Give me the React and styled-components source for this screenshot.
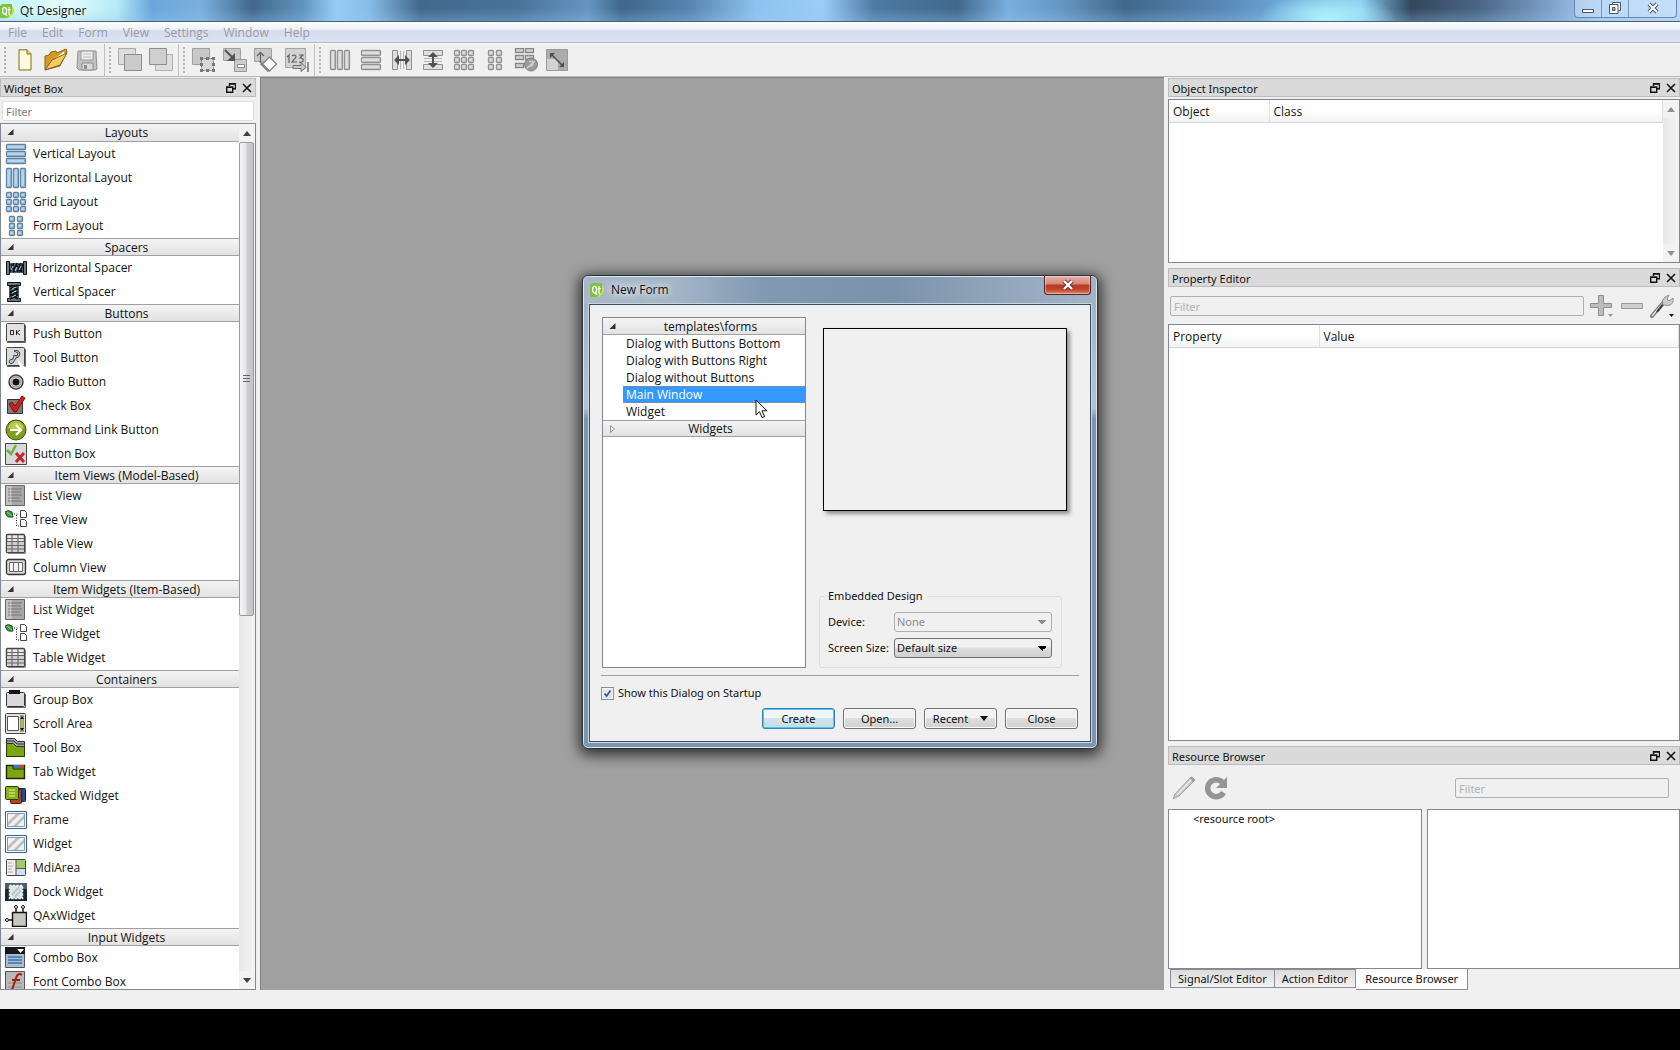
import React, { useState } from 'react';
import styled, { createGlobalStyle, css } from 'styled-components';

const GlobalStyle = createGlobalStyle`
  * {
    box-sizing: border-box;
  }

  body {
    margin: 0;
    background: #000;
    color: #111;
    font-family: "Open Sans", "Noto Sans", sans-serif;
    font-size: 12px;
    line-height: 16px;
  }

  button, input, select {
    margin: 0;
    color: inherit;
    font: inherit;
  }

  ul {
    margin: 0;
    padding: 0;
    list-style: none;
  }

  svg {
    display: block;
    flex: none;
  }
`;

const smallText = css`
  font-family: "Noto Sans", sans-serif;
  font-size: 11px;
  line-height: 16px;
`;

const Screen = styled.div`
  position: relative;
  display: flex;
  flex-direction: column;
  height: 100vh;
  padding-bottom: 41px;
  overflow: hidden;
  background: #000;
`;

const AppWindow = styled.div`
  display: flex;
  flex-direction: column;
  flex: 1;
  min-height: 0;
  background: #f0f0f0;
`;

const TitleBar = styled.header`
  display: flex;
  align-items: center;
  flex: none;
  height: 22px;
  border-bottom: 1px solid #45607c;
  background:
    linear-gradient(180deg, transparent 40%, rgba(150, 200, 240, 0.3) 100%),
    radial-gradient(ellipse 70px 30px at 79% 100%, #b4fbff 10%, transparent 100%),
    linear-gradient(90deg, #c2f4f4 0, #e4fcfa 4%, #b4eaf6 7%, #6aa6dc 9%, #7ab0de 12%, #41688c 15%,
      #5f93bd 18%, #97ccf4 20%, #87bce6 22%, #41688c 25%, #4a749c 31%, #6596c0 35%, #3f668c 37%,
      #5585b0 41%, #8fc2ee 45%, #9accf6 49%, #4d7ba4 52%, #41688c 57%, #7aaede 60%, #6798c4 63%,
      #41688c 67%, #5a8ab8 73%, #6aa4d6 76%, #84c8ec 81%, #33475e 84%, #4a6684 88%, #7a9cc4 92%,
      #a8cdf2 95%, #bcdcfa 100%);
`;

const TitleText = styled.h1`
  flex: 1;
  margin: 0 0 0 6px;
  font-size: 12px;
  font-weight: 400;
`;

const WindowButtons = styled.div`
  display: flex;
  align-self: flex-start;
  height: 18px;
  margin-right: 3px;
  border: 1px solid #6c87a6;
  border-top: 0;
  border-radius: 0 0 4px 4px;
  background: rgba(205, 228, 250, 0.5);
`;

const WindowButton = styled.button`
  display: flex;
  align-items: center;
  justify-content: center;
  width: ${({ $wide }) => ($wide ? 47 : 27)}px;
  padding: 0 0 2px;
  border: 0;
  border-right: ${({ $wide }) => ($wide ? '0' : '1px solid #7d98b6')};
  background: none;
`;

const MenuBar = styled.nav`
  display: flex;
  align-items: center;
  flex: none;
  height: 21px;
  padding: 2px 2px 0;
  border-bottom: 1px solid #b4b8c4;
  background: linear-gradient(#fdfdfe 0, #f0f2f9 35%, #d6dcee 45%, #dde4f4 100%);
`;

const MenuItem = styled.button`
  padding: 0 6px;
  margin-right: 3px;
  border: 0;
  background: none;
  color: #9b9ca3;
`;

const ToolBars = styled.div`
  display: flex;
  flex: none;
  height: 34px;
  border-top: 1px solid #fafafa;
  border-bottom: 1px solid #b8b8b8;
`;

const ToolBar = styled.div`
  display: flex;
  align-items: center;
  gap: 7px;
  padding: 0 5px 0 4px;
  border-right: ${({ $last }) => ($last ? '0' : '1px solid #c0c0c0')};
`;

const Grip = styled.span`
  width: 2px;
  height: 26px;
  background: repeating-linear-gradient(#b2b2b2 0 2px, transparent 2px 4px);
`;

const IconButton = styled.button`
  display: flex;
  align-items: center;
  justify-content: center;
  min-width: ${({ $tool }) => ($tool ? 24 : 0)}px;
  padding: 0;
  border: 0;
  background: none;
`;

const Workspace = styled.div`
  display: flex;
  flex: 1;
  gap: 4px;
  min-height: 0;
`;

const LeftColumn = styled.aside`
  display: flex;
  flex-direction: column;
  flex: none;
  width: 256px;
  padding-top: 1px;
`;

const MdiSpace = styled.main`
  flex: 1;
  border-top: 1px solid #828282;
  border-left: 1px solid #828282;
  background: #a0a0a0;
`;

const RightColumn = styled.aside`
  display: flex;
  flex-direction: column;
  flex: none;
  width: 512px;
  padding-top: 1px;
`;

const Dock = styled.section`
  display: flex;
  flex-direction: column;
  flex: ${({ $grow }) => ($grow ? '1' : 'none')};
  height: ${({ $height }) => ($height ? `${$height}px` : 'auto')};
  min-height: 0;
  margin-bottom: ${({ $gap }) => $gap || 0}px;
`;

const DockTitle = styled.div`
  display: flex;
  align-items: center;
  flex: none;
  gap: 6px;
  height: 19px;
  padding: 0 3px;
  border: 1px solid #bcbcbc;
  background: #dadada;
`;

const DockName = styled.h2`
  ${smallText}
  flex: 1;
  margin: 0;
  padding-top: 2px;
  font-weight: 400;
`;

const FilterInput = styled.input`
  ${smallText}
  width: 100%;
  height: 20px;
  padding: 1px 3px 0;
  border: 1px solid ${({ disabled }) => (disabled ? '#b0b0b0' : '#dcdfe4')};
  border-radius: 2px;
  background: ${({ disabled }) => (disabled ? '#f0f0f0' : '#fff')};

  &::placeholder {
    color: ${({ disabled }) => (disabled ? '#b2b2b2' : '#7c7c7c')};
    opacity: 1;
  }
`;

const WidgetFilter = styled.div`
  display: flex;
  flex: none;
  padding: 4px 2px 2px;
`;

const ListFrame = styled.div`
  display: flex;
  flex: 1;
  min-height: 0;
  margin-top: ${({ $spaced }) => ($spaced ? 2 : 0)}px;
  border: 1px solid #828790;
  background: #fff;
`;

const ListBody = styled.div`
  flex: 1;
  min-width: 0;
  overflow: hidden;
`;

const CategoryButton = styled.button`
  position: relative;
  display: block;
  width: 100%;
  height: ${({ $compact }) => ($compact ? 17 : 18)}px;
  padding: 0 0 0 13px;
  border: solid #a0a0a0;
  border-width: ${({ $first }) => ($first ? '0 0 1px' : '1px 0')};
  background: linear-gradient(#f4f4f4, #e2e2e2);
  line-height: 15px;
  text-align: center;
`;

const CategoryArrow = styled.svg`
  position: absolute;
  top: 4px;
  left: 6px;
`;

const WidgetRow = styled.li`
  display: flex;
  align-items: center;
  gap: 6px;
  height: 24px;
  padding-left: 4px;
  white-space: nowrap;
`;

const ScrollTrack = styled.div`
  display: flex;
  flex-direction: column;
  flex: none;
  width: 16px;
  background: linear-gradient(90deg, #e8e8e8, #f4f4f4);
`;

const ScrollArrow = styled.button`
  display: flex;
  align-items: center;
  justify-content: center;
  flex: none;
  height: 18px;
  padding: 0;
  border: 0;
  background: #f2f2f2;
`;

const ScrollThumb = styled.div`
  display: flex;
  align-items: center;
  justify-content: center;
  flex: ${({ $share }) => $share};
  margin-right: 1px;
  border: 1px solid #9a9a9a;
  border-radius: 2px;
  background: linear-gradient(90deg, #f6f6f6, #e6e6e8 45%, #cfcfd2 55%, #c4c4c8);
`;

const ScrollRest = styled.div`
  flex: ${({ $share }) => $share};
`;

const HeaderTable = styled.table`
  flex: 1;
  align-self: flex-start;
  border-collapse: collapse;
  table-layout: fixed;
  width: 100%;
`;

const HeaderCell = styled.th`
  width: ${({ $width }) => ($width ? `${$width}px` : 'auto')};
  height: 22px;
  padding: 2px 4px 0;
  border-right: 1px solid #dfe2e5;
  border-bottom: 1px solid #d5d5d5;
  background: linear-gradient(#fff 45%, #f1f3f5);
  font-weight: 400;
  text-align: left;
`;

const PropertyTools = styled.div`
  display: flex;
  align-items: center;
  flex: none;
  gap: 6px;
  height: 37px;
  padding: 0 6px 0 2px;
`;

const ResourceTools = styled.div`
  display: flex;
  align-items: center;
  flex: none;
  gap: 8px;
  height: 44px;
  padding: 2px 11px 0 4px;
`;

const ResourceFilter = styled.div`
  display: flex;
  width: 214px;
  margin-left: auto;
`;

const ResourceSplit = styled.div`
  display: grid;
  grid-template-columns: 254px 1fr;
  flex: 1;
  gap: 5px;
  min-height: 0;
`;

const ResourceList = styled.ul`
  ${smallText}
  padding: 1px 24px;
  border: 1px solid #828790;
  background: #fff;
`;

const DockTabs = styled.div`
  display: flex;
  align-items: flex-start;
  flex: none;
  height: 21px;
  padding-left: 2px;
`;

const DockTab = styled.button`
  ${smallText}
  height: ${({ $active }) => ($active ? 21 : 19)}px;
  padding: 0 ${({ $active }) => ($active ? 9 : 7)}px;
  border: 1px solid #898c95;
  border-top-width: ${({ $active }) => ($active ? 0 : 1)}px;
  background: ${({ $active }) => ($active ? '#fff' : 'linear-gradient(#dcdcdc, #f2f2f2)')};
  white-space: nowrap;

  & + & {
    border-left: 0;
  }
`;

const StatusBar = styled.footer`
  flex: none;
  height: 19px;
`;

const DialogLayer = styled.div`
  position: absolute;
  inset: 0;
  display: flex;
  align-items: flex-start;
  justify-content: center;
  padding-top: 275px;
  pointer-events: none;
`;

const Dialog = styled.div`
  position: relative;
  display: flex;
  flex-direction: column;
  width: 516px;
  padding: 0 6px 6px;
  border: 1px solid #27333f;
  border-radius: 6px;
  background:
    linear-gradient(90deg, #a9b9ca 0, #a4b5c6 18%, #8199b3 35%, #7b92ac 60%, #91a5ba 80%, #a3b4c4 100%) top / 100% 28px no-repeat,
    linear-gradient(#9fb0c2 0, #b4c3d2 28%, #7f96b0 30%, #7f96b0 100%);
  box-shadow: inset 0 0 0 1px #d8e4ee, 0 3px 14px 3px rgba(0, 0, 0, 0.7);
  pointer-events: auto;
`;

const DialogTitle = styled.div`
  display: flex;
  align-items: center;
  height: 28px;
  padding-left: 1px;
`;

const DialogName = styled.h2`
  flex: 1;
  margin: 0 0 0 7px;
  font-size: 12px;
  font-weight: 400;
  text-shadow: 0 0 8px #fff, 0 0 8px #fff;
`;

const DialogClose = styled.button`
  display: flex;
  align-items: center;
  justify-content: center;
  align-self: flex-start;
  width: 47px;
  height: 19px;
  padding: 0 0 1px;
  border: 1px solid #4c2727;
  border-top: 0;
  border-radius: 0 0 4px 4px;
  background: linear-gradient(#e6b3a8 0, #d58574 45%, #b93a24 50%, #c4452b 75%, #dc8766 100%);
  box-shadow: inset 0 0 0 1px rgba(255, 255, 255, 0.4);
`;

const DialogBody = styled.div`
  padding: 12px 11px;
  border: 1px solid #3b4f63;
  background: #f0f0f0;
  box-shadow: 0 0 0 1px #c8d6e2;
`;

const DialogColumns = styled.div`
  display: grid;
  grid-template-columns: 204px 1fr;
  gap: 13px;
  height: 351px;
  padding-left: 1px;
`;

const TemplateTree = styled.div`
  border: 1px solid #828790;
  background: #fff;
`;

const TemplateItem = styled.button`
  display: block;
  width: calc(100% - 20px);
  height: 17px;
  margin-left: 20px;
  padding: 0 2px;
  border: 1px solid ${({ $selected }) => ($selected ? '#6f8fae' : 'transparent')};
  border-width: 1px 0 1px 1px;
  background: ${({ $selected }) => ($selected ? '#3399ff' : 'none')};
  color: ${({ $selected }) => ($selected ? '#fff' : 'inherit')};
  line-height: 15px;
  text-align: left;
`;

const PreviewColumn = styled.div`
  display: flex;
  flex-direction: column;
  justify-content: space-between;
  padding-top: 11px;
`;

const Preview = styled.div`
  width: 244px;
  height: 183px;
  margin-left: 4px;
  border: 1px solid #000;
  box-shadow: 3px 3px 4px rgba(0, 0, 0, 0.4);
`;

const EmbeddedGroup = styled.fieldset`
  ${smallText}
  display: grid;
  grid-template-columns: 66px 158px;
  align-content: start;
  row-gap: 6px;
  width: 243px;
  margin: 0;
  padding: 8px 8px 9px;
  border: 1px solid #d5dfe5;
  border-radius: 3px;
`;

const GroupLegend = styled.legend`
  padding: 0 4px 0 0;
`;

const FieldLabel = styled.label`
  line-height: 20px;
  white-space: nowrap;
`;

const Select = styled.select`
  height: 20px;
  padding: 0 16px 0 2px;
  border: 1px solid ${({ disabled }) => (disabled ? '#b0b0b0' : '#707070')};
  border-radius: 3px;
  appearance: none;
  background:
    ${({ disabled }) => css`
      linear-gradient(to bottom right, ${disabled ? '#8c8c8c' : '#000'} 50%, transparent 50%) right 4px top 7px / 5px 5px no-repeat,
      linear-gradient(to bottom left, ${disabled ? '#8c8c8c' : '#000'} 50%, transparent 50%) right 9px top 7px / 4px 5px no-repeat,
      ${disabled ? '#f0f0f0' : 'linear-gradient(#f2f2f2 45%, #dddddd 50%, #cfcfcf)'}
    `};
  color: ${({ disabled }) => (disabled ? '#8c8c8c' : '#111')};
  opacity: 1;
`;

const DialogFooter = styled.div`
  margin-top: 7px;
  padding-top: 9px;
  border-top: 1px solid #a0a0a0;
`;

const CheckLabel = styled.label`
  ${smallText}
  display: flex;
  align-items: center;
  gap: 4px;
`;

const CheckInput = styled.input`
  width: 13px;
  height: 13px;
  appearance: none;
  border: 1px solid #8e8f8f;
  background: #e4e9f0;
  box-shadow: inset 0 0 0 1px #f4f4f4;

  &:checked {
    background: url("data:image/svg+xml,%3Csvg xmlns='http://www.w3.org/2000/svg' viewBox='0 0 11 11'%3E%3Cpath d='M2.5 5.5 4.6 8 8.5 2.5' fill='none' stroke='%233d5a92' stroke-width='1.8'/%3E%3C/svg%3E") #e0e6ee;
  }
`;

const ButtonRow = styled.div`
  display: flex;
  justify-content: flex-end;
  gap: 8px;
  margin-top: 7px;
  padding-right: 1px;
`;

const PushButton = styled.button`
  ${smallText}
  display: flex;
  align-items: center;
  justify-content: center;
  gap: 12px;
  width: 73px;
  height: 21px;
  padding: 0;
  border: 1px solid ${({ $primary }) => ($primary ? '#3c7fb1' : '#707070')};
  border-radius: 3px;
  background: ${({ $primary }) =>
    $primary ? 'linear-gradient(#eef6f8 45%, #d2e4ea 50%, #c4dde4)' : 'linear-gradient(#f2f2f2 45%, #dedede 50%, #d0d0d0)'};
  box-shadow: inset 0 0 0 1px ${({ $primary }) => ($primary ? '#48c8ee' : '#fbfbfb')};
`;

const MousePointer = styled.svg`
  position: absolute;
  top: 123px;
  left: 172px;
`;

const Icon = ({ children, size = 22, box = 22 }) => (
  <svg width={size} height={size} viewBox={`0 0 ${box} ${box}`} aria-hidden="true">
    {children}
  </svg>
);

const QtLogo = ({ size = 14 }) => (
  <Icon size={size} box={14}>
    <path d="M2 0h10v10l-4 4H0V2z" fill="#80c342" />
    <path d="M12 2l2 3v4l-5 5H7l5-5z" fill="#cde03a" />
    <ellipse cx="4.6" cy="6.8" rx="2" ry="3.4" fill="none" stroke="#fff" strokeWidth="1.3" />
    <path d="M5 9l2 3M9 3v7q0 1 1.5 1M7.8 5.6h3" fill="none" stroke="#fff" strokeWidth="1.2" />
  </Icon>
);

const Bars = ({ rects, fill, stroke, shade }) => (
  <Icon>
    {rects.map(([x, y, w, h]) => (
      <g key={`${x}-${y}`}>
        <rect x={x + 0.5} y={y + 0.5} width={w - 1} height={h - 1} rx="1" fill={fill} stroke={stroke} strokeWidth="1.3" />
        <path d={`M${x + 1.5} ${y + h - 1.5}H${x + w - 1.5}V${y + 1.5}`} fill="none" stroke={shade} />
      </g>
    ))}
  </Icon>
);

const horizontalRects = [[1, 1, 6, 20], [8, 1, 6, 20], [15, 1, 6, 20]];
const verticalRects = [[1, 1, 20, 6], [1, 8, 20, 6], [1, 15, 20, 6]];
const gridRects = [1, 8, 15].flatMap((y) => [1, 8, 15].map((x) => [x, y, 6, 6]));
const formRects = [1, 8, 15].flatMap((y) => [[4, y, 6, 6], [12, y, 6, 6]]);
const blue = { fill: '#b3d6ee', stroke: '#63819d', shade: '#86b2d3' };
const grey = { fill: '#dedede', stroke: '#929292', shade: '#bcbcbc' };

const Arrow = ({ up, color = '#404040' }) => (
  <svg width="8" height="5" viewBox="0 0 8 5" aria-hidden="true">
    <path d={up ? 'M0 5L4 0l4 5z' : 'M0 0h8L4 5z'} fill={color} />
  </svg>
);

const toolIcons = {
  newForm: (
    <Icon>
      <path d="M5 .8h8l4 4V21H5z" fill="#fff6b8" stroke="#8a6a20" />
      <path d="M6 2h6v4h4v14H6z" fill="#fffbe0" />
      <path d="M13 .8V5h4" fill="#f0ce60" stroke="#8a6a20" />
    </Icon>
  ),
  open: (
    <Icon size={24} box={24}>
      <path d="M1 22V8l4-1 2-3 5-1 1 2 9-4 1 3-7 14z" fill="#d39a26" stroke="#8b6418" />
      <path d="M5 15L20 3l1 4L8 18z" fill="#fffbe6" stroke="#b79040" strokeWidth=".6" />
      <path d="M1 22l7-10 15-7-7 12z" fill="#f2ca62" stroke="#8b6418" />
    </Icon>
  ),
  save: (
    <Icon>
      <path d="M2 2h18l1 18-2 1H3l-2-2z" fill="#c2c2c2" stroke="#929292" />
      <path d="M5 2h12v9H5z" fill="#ededed" stroke="#999" />
      <path d="M7 5h8M7 8h8" stroke="#bbb" />
      <path d="M6 14h11v7H6z" fill="#dadada" stroke="#8a8a8a" />
      <path d="M8 16h3v4H8z" fill="#8d8d8d" />
    </Icon>
  ),
  back: (
    <Icon size={24} box={24}>
      <path d="M.5.500h17v16H.5z" fill="#dcdcdc" stroke="#aaa" />
      <path d="M6.500 6.500h17v16h-17z" fill="#cbcbcb" stroke="#8d8d8d" />
    </Icon>
  ),
  front: (
    <Icon size={24} box={24}>
      <path d="M6.500 6.500h17v16h-17z" fill="#dedede" stroke="#b0b0b0" />
      <path d="M.5.500h17v16H.5z" fill="#cfcfcf" stroke="#8d8d8d" />
    </Icon>
  ),
  widgets: (
    <Icon size={24} box={24}>
      <path d="M.5.500h17v16H.5z" fill="#c8c8c8" stroke="#a0a0a0" />
      <path d="M9.500 10.500h12v12h-12z" fill="#d8d8d8" stroke="#777" strokeDasharray="2 1" />
      <path d="M8 9h3v3H8zM14 9h3v3h-3zM20 9h3v3h-3zM8 15h3v3H8zM20 15h3v3h-3zM8 21h3v3H8zM14 21h3v3h-3zM20 21h3v3h-3z" fill="#777" />
    </Icon>
  ),
  signals: (
    <Icon size={24} box={24}>
      <path d="M.5.500h17v12H.5z" fill="#c8c8c8" stroke="#a0a0a0" />
      <path d="M11.500 11.500h12v12h-12z" fill="#ccc" stroke="#999" />
      <path d="M14.500 16.500h7v3h-7z" fill="#fff" stroke="#888" />
      <path d="M2 2l9 9" stroke="#555" strokeWidth="2" />
      <path d="M12 5v8H4z" fill="#555" />
    </Icon>
  ),
  buddies: (
    <Icon size={24} box={24}>
      <path d="M.5.500h17v13H.5z" fill="#c8c8c8" stroke="#a0a0a0" />
      <path d="M7 15l8 8" stroke="#777" strokeWidth="3" />
      <path d="M15.500 9l7 7-7 7-7-7z" fill="#fafafa" stroke="#888" strokeWidth="1.500" />
      <path d="M6.500 15V5M3 8l3.500-3.500L10 8" fill="none" stroke="#666" strokeWidth="1.300" />
    </Icon>
  ),
  order: (
    <Icon size={24} box={24}>
      <path d="M.5.500h20v19H.5z" fill="#d2d2d2" stroke="#a6a6a6" />
      <path d="M2 9l2-2v8M7 8q4-2 4 1l-4 5h5M14 7h4l-3 3q4 0 3 3-1 2-4 1" fill="none" stroke="#606060" strokeWidth="1.200" />
      <path d="M8 17.500h8v-3l5 5-5 4v-3H8z" fill="#c9c9c9" stroke="#707070" />
      <path d="M23 14v10" stroke="#707070" strokeWidth="1.500" />
    </Icon>
  ),
  horizontal: <Bars rects={horizontalRects} {...grey} />,
  vertical: <Bars rects={verticalRects} {...grey} />,
  splitH: (
    <Icon>
      <path d="M1.500 1.500h5v19h-5zM15.500 1.500h5v19h-5z" fill="#dedede" stroke="#929292" />
      <path d="M9.500 2v18M12.500 2v18" stroke="#b4b4b4" />
      <path d="M3 11l5-5v4h6V6l5 5-5 5v-4H8v4z" fill="#505050" />
    </Icon>
  ),
  splitV: (
    <Icon>
      <path d="M1.500 1.500h19v5h-19zM1.500 15.500h19v5h-19z" fill="#dedede" stroke="#929292" />
      <path d="M2 9.500h18M2 12.500h18" stroke="#b4b4b4" />
      <path d="M11 3l5 5h-4v6h4l-5 5-5-5h4V8H6z" fill="#505050" />
    </Icon>
  ),
  grid: <Bars rects={gridRects} {...grey} />,
  form: <Bars rects={formRects} {...grey} />,
  breakLayout: (
    <Icon size={24} box={24}>
      <path d="M1.500.500h8v4h-8zM11.500.500h8v4h-8zM1.500 7.500h8v4h-8zM11.500 7.500h8v4h-8zM1.500 15.500h8v4h-8z" fill="#d2d2d2" stroke="#888" strokeWidth="1.300" />
      <circle cx="17" cy="16.500" r="6.500" fill="#9a9a9a" stroke="#7c7c7c" />
      <path d="M13 20l8-7M15 14q5-2 4 2l-2 3" fill="none" stroke="#d4d4d4" strokeWidth="1.300" />
    </Icon>
  ),
  adjust: (
    <Icon>
      <path d="M.5.500h21v21H.5z" fill="#ababab" stroke="#9a9a9a" />
      <path d="M1 10h11v11H1z" fill="#d2d2d2" />
      <path d="M6 6l11 11" stroke="#4e4e4e" strokeWidth="1.600" />
      <path d="M4 4h5L4 9zM18 18h-5l5-5z" fill="#4e4e4e" />
    </Icon>
  ),
};

const listIcon = (
  <Icon>
    <path d="M.5.500h19v20H.5z" fill="#a8a8a8" stroke="#666" />
    <path d="M1 1h6v19H1z" fill="#d4d4d4" opacity=".6" />
    <path d="M3 4h2M3 7h2M3 10h2M3 13h2M3 16h2M6 4h11M6 7h10M6 10h11M6 13h9M6 16h11" stroke="#747474" />
  </Icon>
);

const treeIcon = (
  <Icon>
    <path d="M0 3q3-3 7 0l1 5q-6 1-7-3z" fill="#3c9a3c" stroke="#184f18" />
    <path d="M2 3l5 4" stroke="#9ad29a" />
    <path d="M9 5h5M11.500 6v11h4" fill="none" stroke="#222" strokeDasharray="1 1.500" />
    <path d="M15.500 1.500h4l2 2v5h-6zM15.500 10.500h4l2 2v5h-6z" fill="#fff" stroke="#444" />
  </Icon>
);

const tableIcon = (
  <Icon>
    <path d="M3 20.500h17.500V3" fill="none" stroke="#999" />
    <rect x="1.500" y="1.500" width="18" height="18" rx="1" fill="#e9e9e9" stroke="#444" strokeWidth="1.400" />
    <path d="M2 8h17v11H2z" fill="#cfcfcf" />
    <path d="M2 5.500h17M2 8.500h17M2 12.500h17M2 16h17M7 2v17M13 2v17" stroke="#666" strokeWidth="1.100" />
  </Icon>
);

const stripes = (
  <Icon>
    <path d="M.5 2.500h21v17H.5z" fill="#fff" stroke="#35648f" />
    <path d="M2.500 4.500h17v13h-17z" fill="#f1f1f1" stroke="#7b9cba" />
    <path d="M3 13l8-8h4L3 17zM8 17L19 6v4l-7 7z" fill="#c0c0c0" />
  </Icon>
);

const widgetIcons = {
  vertical: <Bars rects={verticalRects} {...blue} />,
  horizontal: <Bars rects={horizontalRects} {...blue} />,
  grid: <Bars rects={gridRects} {...blue} />,
  form: <Bars rects={formRects} {...blue} />,
  hSpacer: (
    <Icon>
      <path d="M1.500 4.500h3v13h-3zM18.500 4.500h3v13h-3z" fill="#777" stroke="#111" />
      <path d="M5 6h13v10H5z" fill="#536270" />
      <path d="M5 15l4-9M8 15l4-9M12 15l4-9M15 15l3-8M6 7l4 8M11 7l4 8M14 7l3 8" stroke="#0d1217" strokeWidth="1.500" />
      <path d="M6 13l2-4M10 14l2-4M14 13l2-4" stroke="#c3d5e4" />
    </Icon>
  ),
  vSpacer: (
    <Icon>
      <path d="M2.500 1.500h13v3h-13zM2.500 17.500h13v3h-13z" fill="#777" stroke="#111" />
      <path d="M4 5h10v13H4z" fill="#536270" />
      <path d="M5 8l8-4M5 12l8-5M5 15l8-4M5 18l8-4M5 5l8 4M5 10l8 4M5 13l8 5" stroke="#0d1217" strokeWidth="1.500" />
      <path d="M7 8l4-2M7 12l4-2M7 16l4-2" stroke="#c3d5e4" />
    </Icon>
  ),
  push: (
    <Icon>
      <rect x="2" y="2" width="19" height="18" rx="1" fill="#666" />
      <rect x="1.500" y=".5" width="18" height="18" rx="1" fill="#e2e2e2" stroke="#444" />
      <path d="M5.500 7.500h3v4h-3zM11.500 7v5M15 7l-3 2.500 3 2.500" fill="none" stroke="#222" />
    </Icon>
  ),
  tool: (
    <Icon>
      <rect x="2" y="2" width="19" height="18" rx="1" fill="#666" />
      <rect x="1.500" y=".5" width="18" height="18" rx="1" fill="#d8dade" stroke="#444" />
      <path d="M9 4q5-2 6 3-1 4-4 4l-3 5q-3 2-4-1 0-3 4-3l1-4 3 1 1-3z" fill="#bcc3c9" stroke="#444" />
      <path d="M12 12l8 8h-5z" fill="#fff" />
    </Icon>
  ),
  radio: (
    <Icon>
      <circle cx="11" cy="11" r="7" fill="#c8c8c8" stroke="#444" strokeWidth="1.500" />
      <circle cx="11" cy="11" r="5" fill="#dcdcdc" stroke="#999" />
      <circle cx="11" cy="11" r="3.500" fill="#111" />
    </Icon>
  ),
  check: (
    <Icon>
      <path d="M2.500 4.500h15v14h-15z" fill="#7c7c7c" stroke="#333" />
      <path d="M4 9l3-2 3 4 7-10 3 2-9 14H9z" fill="#c62222" stroke="#7a0e0e" />
    </Icon>
  ),
  command: (
    <Icon>
      <circle cx="11" cy="11" r="10" fill="#7f9f1e" stroke="#3f5208" />
      <path d="M3 9q2-6 8-7 6 1 8 7-8 3-16 0z" fill="#b4ce4c" />
      <path d="M5 11h10M11 6l5 5-5 5" fill="none" stroke="#fff" strokeWidth="2.200" />
    </Icon>
  ),
  buttonBox: (
    <Icon>
      <path d="M.5.500h21v21H.5z" fill="#d8d8d8" stroke="#444" />
      <path d="M2 7l4 4 5-9" fill="none" stroke="#6cb33e" strokeWidth="2.500" />
      <path d="M11 10l8 9M19 10l-8 9" stroke="#c3272b" strokeWidth="3" />
    </Icon>
  ),
  list: listIcon,
  tree: treeIcon,
  table: tableIcon,
  column: (
    <Icon>
      <rect x="1.500" y="2.500" width="19" height="15" rx="2" fill="#d8d8d8" stroke="#333" strokeWidth="1.300" />
      <path d="M4.500 5.500h4v9h-4zM8.500 5.500h5v9h-5zM13.500 5.500h4v9h-4z" fill="#f4f4f4" stroke="#666" />
    </Icon>
  ),
  group: (
    <Icon>
      <rect x="1.500" y="3.500" width="18" height="14" rx="1" fill="#d9d9d9" stroke="#333" />
      <path d="M4 1h11v4H4z" fill="#111" />
      <path d="M2 18.500h18.500V5" fill="none" stroke="#666" />
    </Icon>
  ),
  scroll: (
    <Icon>
      <rect x=".5" y=".5" width="20" height="20" rx="1" fill="#e2e2e2" stroke="#444" />
      <path d="M2.500 3.500h11v14h-11z" fill="#fff" stroke="#555" />
      <path d="M15.500 2.500h3v16h-3z" fill="#a8c34a" stroke="#666" strokeWidth=".5" />
      <path d="M15 6l2-3 2 3zM15 15h4l-2 3z" fill="#111" />
    </Icon>
  ),
  toolBox: (
    <Icon>
      <path d="M1.500 1.500h8l3 3h7v15h-18z" fill="#a5a8b5" stroke="#333" />
      <path d="M1.500 6.500h7l3 3h8v10h-18z" fill="#7da512" stroke="#2a3c04" />
      <path d="M2 4h7l3 3h7" fill="none" stroke="#333" />
    </Icon>
  ),
  tab: (
    <Icon>
      <path d="M1.500 4.500h18v13h-18z" fill="#7da512" stroke="#1c2a02" strokeWidth="1.400" />
      <path d="M8 4h6v3H8z" fill="#3a78b8" />
      <path d="M14 4h5v3h-5z" fill="#c24a22" />
      <path d="M2 4.500h6V8h11" fill="none" stroke="#1c2a02" />
    </Icon>
  ),
  stacked: (
    <Icon>
      <rect x="9.500" y="3.500" width="11" height="13" rx="1" fill="#26489c" stroke="#101c44" />
      <rect x="5.500" y="4.500" width="11" height="14" rx="1" fill="#b2441c" stroke="#4c1a08" />
      <rect x=".5" y="1.500" width="13" height="13" rx="1" fill="#86b01a" stroke="#2a3c04" />
      <path d="M4 5h6M4 8h6M4 11h6" stroke="#e4f2a4" />
    </Icon>
  ),
  stripes,
  mdi: (
    <Icon>
      <rect x="1.500" y="2.500" width="19" height="16" rx="1" fill="#eee" stroke="#444" />
      <path d="M11 3h9v8h-9z" fill="#a5c968" />
      <path d="M11 12h9v6h-9z" fill="#cfe0ee" />
      <path d="M11 3v15M11 11.500h10" stroke="#555" />
      <path d="M3 6h4M3 9h5M3 12h4M3 15h5" stroke="#aaa" />
    </Icon>
  ),
  dock: (
    <Icon>
      <path d="M0 2h22v18H0z" fill="#1a2630" />
      <path d="M0 2h22v6H0z" fill="#8494a0" opacity=".5" />
      <path d="M4.500 4.500h13v13h-13z" fill="#dce6ea" stroke="#fff" strokeWidth="1.500" strokeDasharray="2 1.500" />
      <path d="M7 14l7-8M10 16l6-7" stroke="#b8c6cc" strokeWidth="2" />
    </Icon>
  ),
  qax: (
    <Icon>
      <path d="M7.500 7.500h14v14h-14z" fill="#c8c6c2" stroke="#111" strokeWidth="1.400" />
      <path d="M11 7V4M18 7V4M7 15H4" stroke="#111" strokeWidth="1.400" />
      <circle cx="11" cy="2" r="1.500" fill="#fff" stroke="#111" />
      <circle cx="18" cy="2" r="1.500" fill="#fff" stroke="#111" />
      <circle cx="2" cy="15" r="1.500" fill="#fff" stroke="#111" />
    </Icon>
  ),
  combo: (
    <Icon>
      <path d="M.5.500h19v20H.5z" fill="#a9bccd" stroke="#555" />
      <path d="M0 0h20v7H0z" fill="#14181c" />
      <path d="M12 2h7l-3.500 4z" fill="#fff" />
      <path d="M3 10h14M3 13h14M3 16h14" stroke="#3e74a8" strokeWidth="1.500" />
    </Icon>
  ),
  fontCombo: (
    <Icon>
      <path d="M.5.500h19v20H.5z" fill="#b8bab8" stroke="#555" />
      <path d="M3 12h14M3 16h14" stroke="#8e908e" />
      <path d="M17 4q-4-3-6 3L7 19q-1 2-3 1M7 9h8" fill="none" stroke="#a81c1c" strokeWidth="2" />
    </Icon>
  ),
};

const categories = [
  { name: 'Layouts', items: [['Vertical Layout', 'vertical'], ['Horizontal Layout', 'horizontal'], ['Grid Layout', 'grid'], ['Form Layout', 'form']] },
  { name: 'Spacers', items: [['Horizontal Spacer', 'hSpacer'], ['Vertical Spacer', 'vSpacer']] },
  {
    name: 'Buttons',
    items: [['Push Button', 'push'], ['Tool Button', 'tool'], ['Radio Button', 'radio'], ['Check Box', 'check'], ['Command Link Button', 'command'], ['Button Box', 'buttonBox']],
  },
  { name: 'Item Views (Model-Based)', items: [['List View', 'list'], ['Tree View', 'tree'], ['Table View', 'table'], ['Column View', 'column']] },
  { name: 'Item Widgets (Item-Based)', items: [['List Widget', 'list'], ['Tree Widget', 'tree'], ['Table Widget', 'table']] },
  {
    name: 'Containers',
    items: [
      ['Group Box', 'group'], ['Scroll Area', 'scroll'], ['Tool Box', 'toolBox'], ['Tab Widget', 'tab'], ['Stacked Widget', 'stacked'],
      ['Frame', 'stripes'], ['Widget', 'stripes'], ['MdiArea', 'mdi'], ['Dock Widget', 'dock'], ['QAxWidget', 'qax'],
    ],
  },
  { name: 'Input Widgets', items: [['Combo Box', 'combo'], ['Font Combo Box', 'fontCombo']] },
];

const toolGroups = [
  [['New', 'newForm'], ['Open', 'open'], ['Save', 'save']],
  [['Send to Back', 'back'], ['Bring to Front', 'front']],
  [['Edit Widgets', 'widgets'], ['Edit Signals/Slots', 'signals'], ['Edit Buddies', 'buddies'], ['Edit Tab Order', 'order']],
  [
    ['Lay Out Horizontally', 'horizontal'], ['Lay Out Vertically', 'vertical'], ['Horizontal Splitter', 'splitH'], ['Vertical Splitter', 'splitV'],
    ['Grid', 'grid'], ['Form', 'form'], ['Break Layout', 'breakLayout'], ['Adjust Size', 'adjust'],
  ],
];

const menus = ['File', 'Edit', 'Form', 'View', 'Settings', 'Window', 'Help'];
const templates = ['Dialog with Buttons Bottom', 'Dialog with Buttons Right', 'Dialog without Buttons', 'Main Window', 'Widget'];
const tabs = ['Signal/Slot Editor', 'Action Editor', 'Resource Browser'];

const DockHeader = ({ title }) => (
  <DockTitle>
    <DockName>{title}</DockName>
    <IconButton aria-label={`Float ${title}`}>
      <Icon size={10} box={10}>
        <path d="M3.500 3V.800h6v5H7M3 1h7" fill="none" stroke="#111" strokeWidth="1.400" />
        <path d="M.7 4h6v5.300h-6zM.5 4.300h6.400" fill="none" stroke="#111" strokeWidth="1.400" />
      </Icon>
    </IconButton>
    <IconButton aria-label={`Close ${title}`}>
      <Icon size={10} box={10}>
        <path d="M1 1l8 8M9 1L1 9" stroke="#111" strokeWidth="1.600" />
      </Icon>
    </IconButton>
  </DockTitle>
);

const Category = ({ name, open = true, first, compact, onClick }) => (
  <CategoryButton $first={first} $compact={compact} aria-expanded={open} onClick={onClick}>
    <CategoryArrow width="7" height="8" viewBox="0 0 7 8" aria-hidden="true">
      {open ? <path d="M6.500 1v6H.500z" fill="#333" /> : <path d="M1.500.500l4 3.500-4 3.500z" fill="#fff" stroke="#999" />}
    </CategoryArrow>
    {name}
  </CategoryButton>
);

const ColumnHeaders = ({ names, width }) => (
  <HeaderTable>
    <thead>
      <tr>
        <HeaderCell $width={width}>{names[0]}</HeaderCell>
        <HeaderCell>{names[1]}</HeaderCell>
      </tr>
    </thead>
  </HeaderTable>
);

const WidgetBox = () => (
  <LeftColumn>
    <Dock $grow>
      <DockHeader title="Widget Box" />
      <WidgetFilter>
        <FilterInput placeholder="Filter" aria-label="Filter widgets" />
      </WidgetFilter>
      <ListFrame>
        <ListBody>
          {categories.map(({ name, items }, index) => (
            <React.Fragment key={name}>
              <Category name={name} first={index === 0} />
              <ul>
                {items.map(([label, icon]) => (
                  <WidgetRow key={label}>
                    {widgetIcons[icon]}
                    {label}
                  </WidgetRow>
                ))}
              </ul>
            </React.Fragment>
          ))}
        </ListBody>
        <ScrollTrack>
          <ScrollArrow aria-label="Scroll up"><Arrow up /></ScrollArrow>
          <ScrollThumb $share={473}>
            <Icon size={8} box={8}>
              <path d="M0 .500h7M0 3.500h7M0 6.500h7" stroke="#666" />
            </Icon>
          </ScrollThumb>
          <ScrollRest $share={356} />
          <ScrollArrow aria-label="Scroll down"><Arrow /></ScrollArrow>
        </ScrollTrack>
      </ListFrame>
    </Dock>
  </LeftColumn>
);

const RightDocks = () => {
  const [tab, setTab] = useState('Resource Browser');

  return (
    <RightColumn>
      <Dock $height={185} $gap={5}>
        <DockHeader title="Object Inspector" />
        <ListFrame $spaced>
          <ColumnHeaders names={['Object', 'Class']} width={100} />
          <ScrollTrack>
            <ScrollArrow aria-label="Scroll up"><Arrow up color="#909090" /></ScrollArrow>
            <ScrollRest $share={1} />
            <ScrollArrow aria-label="Scroll down"><Arrow color="#909090" /></ScrollArrow>
          </ScrollTrack>
        </ListFrame>
      </Dock>
      <Dock $grow $gap={5}>
        <DockHeader title="Property Editor" />
        <PropertyTools>
          <FilterInput placeholder="Filter" aria-label="Filter properties" disabled />
          <IconButton $tool aria-label="Add property">
            <Icon size={24} box={24}>
              <path d="M8.500 1.500h5v8h8v4h-8v8h-5v-8h-8v-4h8z" fill="#bdbdbd" stroke="#8e8e8e" />
              <path d="M18 20h5l-2.500 3z" fill="#999" />
            </Icon>
          </IconButton>
          <IconButton $tool aria-label="Remove property">
            <Icon>
              <path d="M.5 8.500h21v5H.5z" fill="#cfcfcf" stroke="#999" />
            </Icon>
          </IconButton>
          <IconButton $tool aria-label="Configure">
            <Icon size={24} box={24}>
              <path d="M2 22L14 8" stroke="#777" strokeWidth="4" strokeLinecap="round" />
              <path d="M2 22L13 9" stroke="#ddd" strokeWidth="1.500" />
              <path d="M7 18L14 9" stroke="#333" strokeWidth="2" />
              <path d="M13 11q-2-5 2-8l4-2-2 4 2 2 4-3q1 5-3 7-3 1-5 0z" fill="#ccc" stroke="#909090" />
              <path d="M19 20h5l-2.500 3z" fill="#111" />
            </Icon>
          </IconButton>
        </PropertyTools>
        <ListFrame>
          <ColumnHeaders names={['Property', 'Value']} width={150} />
        </ListFrame>
      </Dock>
      <Dock $height={244}>
        <DockHeader title="Resource Browser" />
        <ResourceTools>
          <IconButton $tool aria-label="Edit resources">
            <Icon size={24} box={24}>
              <path d="M3 18L19 1l4 3L7 20l-6 3z" fill="#c4c4c4" stroke="#a4a4a4" />
              <path d="M5 19L20 3" stroke="#eee" strokeWidth="1.500" />
              <path d="M18 2l2-1 3 3-2 2z" fill="#999" />
            </Icon>
          </IconButton>
          <IconButton $tool aria-label="Reload">
            <Icon size={24} box={24}>
              <path d="M19.500 16.500a8.500 8.500 0 1 1-1-10" fill="none" stroke="#959595" strokeWidth="5.500" />
              <path d="M23 1v11H12z" fill="#959595" />
            </Icon>
          </IconButton>
          <ResourceFilter>
            <FilterInput placeholder="Filter" aria-label="Filter resources" disabled />
          </ResourceFilter>
        </ResourceTools>
        <ResourceSplit>
          <ResourceList>
            <li>&lt;resource root&gt;</li>
          </ResourceList>
          <ResourceList />
        </ResourceSplit>
        <DockTabs role="tablist">
          {tabs.map((name) => (
            <DockTab key={name} role="tab" aria-selected={tab === name} $active={tab === name} onClick={() => setTab(name)}>
              {name}
            </DockTab>
          ))}
        </DockTabs>
      </Dock>
    </RightColumn>
  );
};

const NewFormDialog = () => {
  const [selected, setSelected] = useState('Main Window');
  const [showOnStartup, setShowOnStartup] = useState(true);

  return (
    <DialogLayer>
      <Dialog role="dialog" aria-label="New Form">
        <DialogTitle>
          <QtLogo />
          <DialogName>New Form</DialogName>
          <DialogClose aria-label="Close dialog">
            <Icon size={12} box={12}>
              <path d="M2 2l8 8M10 2l-8 8" stroke="#5c3030" strokeWidth="4" />
              <path d="M2 2l8 8M10 2l-8 8" stroke="#fff" strokeWidth="2.400" />
            </Icon>
          </DialogClose>
        </DialogTitle>
        <DialogBody>
          <DialogColumns>
            <TemplateTree>
              <Category name="templates\forms" first compact />
              {templates.map((name) => (
                <TemplateItem key={name} $selected={selected === name} onClick={() => setSelected(name)}>
                  {name}
                </TemplateItem>
              ))}
              <Category name="Widgets" open={false} compact />
            </TemplateTree>
            <PreviewColumn>
              <Preview />
              <EmbeddedGroup>
                <GroupLegend>Embedded Design</GroupLegend>
                <FieldLabel htmlFor="device">Device:</FieldLabel>
                <Select id="device" disabled>
                  <option>None</option>
                </Select>
                <FieldLabel htmlFor="screen-size">Screen Size:</FieldLabel>
                <Select id="screen-size">
                  <option>Default size</option>
                </Select>
              </EmbeddedGroup>
            </PreviewColumn>
          </DialogColumns>
          <DialogFooter>
            <CheckLabel>
              <CheckInput type="checkbox" checked={showOnStartup} onChange={(e) => setShowOnStartup(e.target.checked)} />
              Show this Dialog on Startup
            </CheckLabel>
            <ButtonRow>
              <PushButton $primary>Create</PushButton>
              <PushButton>Open...</PushButton>
              <PushButton>
                Recent
                <Arrow color="#111" />
              </PushButton>
              <PushButton>Close</PushButton>
            </ButtonRow>
          </DialogFooter>
        </DialogBody>
        <MousePointer width="13" height="20" viewBox="0 0 13 20" aria-hidden="true">
          <path d="M1 1v15l3.500-3.300L7 18.500l2.500-1-2.500-5.700h5z" fill="#fff" stroke="#111" />
        </MousePointer>
      </Dialog>
    </DialogLayer>
  );
};

const App = () => (
  <Screen>
    <GlobalStyle />
    <AppWindow>
      <TitleBar>
        <QtLogo />
        <TitleText>Qt Designer</TitleText>
        <WindowButtons>
          <WindowButton aria-label="Minimize">
            <Icon size={12} box={12}>
              <path d="M.5 7.500h11v3H.5z" fill="#fff" stroke="#48566a" />
            </Icon>
          </WindowButton>
          <WindowButton aria-label="Restore">
            <Icon size={12} box={12}>
              <path d="M3.500.500h8v8h-8z" fill="#fff" stroke="#48566a" />
              <path d="M.5 2.500h8.500v9H.5z" fill="#fff" stroke="#48566a" />
              <path d="M3.500 5.500h2.500v3H3.500z" fill="#9fb4cc" stroke="#48566a" />
            </Icon>
          </WindowButton>
          <WindowButton $wide aria-label="Close">
            <Icon size={12} box={12}>
              <path d="M2 2l8 8M10 2l-8 8" stroke="#48566a" strokeWidth="4" />
              <path d="M2 2l8 8M10 2l-8 8" stroke="#fff" strokeWidth="2" />
            </Icon>
          </WindowButton>
        </WindowButtons>
      </TitleBar>
      <MenuBar>
        {menus.map((name) => (
          <MenuItem key={name}>{name}</MenuItem>
        ))}
      </MenuBar>
      <ToolBars>
        {toolGroups.map((group, index) => (
          <ToolBar key={group[0][0]} $last={index === toolGroups.length - 1}>
            <Grip />
            {group.map(([label, icon]) => (
              <IconButton key={label} $tool aria-label={label}>{toolIcons[icon]}</IconButton>
            ))}
          </ToolBar>
        ))}
      </ToolBars>
      <Workspace>
        <WidgetBox />
        <MdiSpace />
        <RightDocks />
      </Workspace>
      <StatusBar />
    </AppWindow>
    <NewFormDialog />
  </Screen>
);

export default App;
